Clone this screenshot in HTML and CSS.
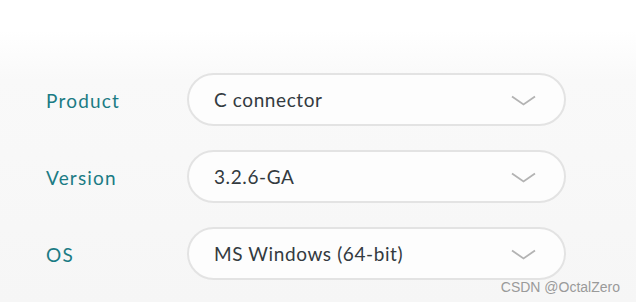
FILE: index.html
```html
<!DOCTYPE html>
<html lang="en">
<head>
    <meta charset="UTF-8">
    <meta name="viewport" content="width=device-width, initial-scale=1.0">
    <title>Download</title>
    <link rel="stylesheet" href="styles.css">
</head>
<body>
    <div class="form">
        <div class="row">
            <label class="label">Product</label>
            <div class="select">
                <span>C connector</span>
                <svg class="chevron" width="25" height="11" viewBox="0 0 25 11"><path d="M1 1.5 L12.5 9.5 L24 1.5" fill="none" stroke="#b3b3b3" stroke-width="1.8"/></svg>
            </div>
        </div>
        <div class="row">
            <label class="label">Version</label>
            <div class="select">
                <span>3.2.6-GA</span>
                <svg class="chevron" width="25" height="11" viewBox="0 0 25 11"><path d="M1 1.5 L12.5 9.5 L24 1.5" fill="none" stroke="#b3b3b3" stroke-width="1.8"/></svg>
            </div>
        </div>
        <div class="row">
            <label class="label">OS</label>
            <div class="select">
                <span>MS Windows (64-bit)</span>
                <svg class="chevron" width="25" height="11" viewBox="0 0 25 11"><path d="M1 1.5 L12.5 9.5 L24 1.5" fill="none" stroke="#b3b3b3" stroke-width="1.8"/></svg>
            </div>
        </div>
    </div>
    <div class="watermark">CSDN @OctalZero</div>
</body>
</html>
```

FILE: styles.css
```css
html, body {
    height: 100%;
}
body {
    margin: 0;
    font-family: Lato, "Noto Sans", sans-serif;
    background: linear-gradient(#ffffff 0px, #ffffff 30px, #f9f9f9 80px, #f6f6f6 302px);
    position: relative;
    overflow: hidden;
}
.form {
    display: flex;
    flex-direction: column;
    gap: 24px;
    padding: 73px 0 0 46px;
}
.row {
    display: flex;
    align-items: center;
}
.label {
    width: 141px;
    font-size: 19px;
    color: #1b7b84;
    letter-spacing: 1.2px;
    padding-top: 2px;
}
.select {
    box-sizing: border-box;
    width: 379px;
    height: 53px;
    border: 2px solid #e3e3e3;
    border-radius: 27px;
    background: #fdfdfd;
    display: flex;
    align-items: center;
    justify-content: space-between;
    padding: 0 28px 0 25px;
    font-size: 19px;
    color: #333a3f;
    letter-spacing: 0.6px;
}
.chevron {
    display: block;
    margin-top: 2px;
}
.watermark {
    position: absolute;
    right: 16px;
    bottom: 7px;
    font-family: "Liberation Sans", Arial, sans-serif;
    font-size: 14px;
    color: #9a9a9a;
}
```
